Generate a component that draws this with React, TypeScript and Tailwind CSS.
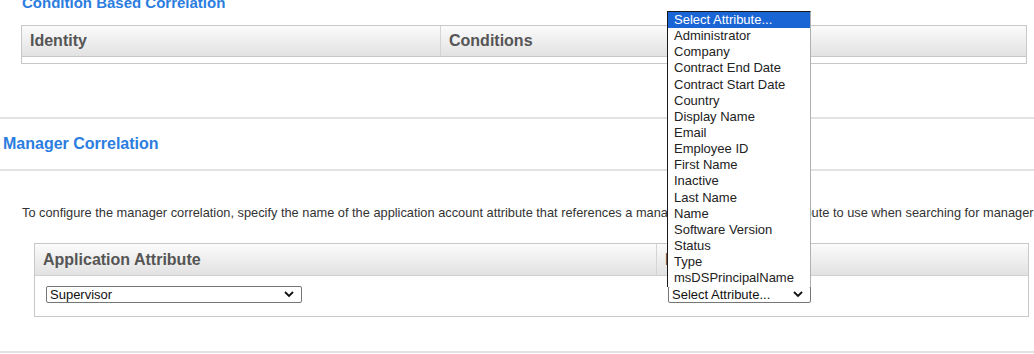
import React from "react";

const items = [
  "Select Attribute...",
  "Administrator",
  "Company",
  "Contract End Date",
  "Contract Start Date",
  "Country",
  "Display Name",
  "Email",
  "Employee ID",
  "First Name",
  "Inactive",
  "Last Name",
  "Name",
  "Software Version",
  "Status",
  "Type",
  "msDSPrincipalName",
];

function Chevron() {
  return (
    <svg width="10" height="7" viewBox="0 0 10 7" className="shrink-0">
      <polyline points="1,1 5,5 9,1" fill="none" stroke="#111" strokeWidth="1.8" />
    </svg>
  );
}

function Select({ label, w }: { label: string; w: string }) {
  return (
    <div
      className={`${w} h-[17px] border border-[#767676] rounded-[2px] bg-white flex items-center justify-between pl-[3px] pr-[7px] text-[13px] leading-none text-[#111]`}
    >
      <span>{label}</span>
      <Chevron />
    </div>
  );
}

const headerBg = "bg-gradient-to-b from-[#fbfbfb] to-[#e2e2e2]";

export default function App() {
  return (
    <div
      className="relative w-[1034px] h-[354px] overflow-hidden bg-white"
      style={{ fontFamily: '"Liberation Sans", Arial, sans-serif' }}
    >
      <div className="flex flex-col">
        {/* Condition Based Correlation */}
        <div className="pl-[22px] mt-[-6px] h-[17px] text-[15px] leading-[17px] font-bold text-[#2b7de0]">
          Condition Based Correlation
        </div>
        <div className="ml-[21px] mt-[14px] w-[1006px] border border-[#c8c8c8]">
          <div className={`flex h-[31px] ${headerBg} border-b border-[#c8c8c8]`}>
            <div className="w-[419px] border-r border-[#d4d4d4] pl-[8px] flex items-center text-[16px] font-bold text-[#555]">
              Identity
            </div>
            <div className="flex-1 pl-[8px] flex items-center text-[16px] font-bold text-[#555]">
              Conditions
            </div>
          </div>
          <div className="h-[6px]" />
        </div>

        <div className="mt-[53px] h-[2px] bg-[#e2e2e2]" />

        {/* Manager Correlation */}
        <div className="h-[50px] pl-[3px] flex items-center text-[16px] font-bold text-[#2b7de0]">
          Manager Correlation
        </div>
        <div className="h-[2px] bg-[#e2e2e2]" />

        <div className="pl-[22px] mt-[34px] text-[12.8px] leading-[15px] text-[#333] whitespace-nowrap">
          To configure the manager correlation, specify the name of the application account attribute that references a manager, and the identity attribute to use when searching for managers.
        </div>

        <div className="ml-[34px] mt-[23px] w-[995px] border border-[#c8c8c8]">
          <div className={`flex h-[32px] ${headerBg} border-b border-[#d0d0d0]`}>
            <div className="w-[622px] border-r border-[#d4d4d4] pl-[8px] flex items-center text-[16px] font-bold text-[#555]">
              Application Attribute
            </div>
            <div className="flex-1 pl-[8px] flex items-center text-[16px] font-bold text-[#555]">
              Identity Attribute
            </div>
          </div>
          <div className="flex h-[40px] items-start pt-[10px]">
            <div className="w-[623px] pl-[11px]">
              <Select label="Supervisor" w="w-[256px]" />
            </div>
            <div className="flex-1 pl-[10px]">
              <Select label="Select Attribute..." w="w-[143px]" />
            </div>
          </div>
        </div>

        <div className="mt-[34px] h-[2px] bg-[#e2e2e2]" />
      </div>

      {/* open dropdown list */}
      <div className="absolute left-[667px] top-[11px] w-[144px] h-[276px] bg-white border-l border-t border-[#1a1a1a] border-r border-r-[#b0b0b0]">
        {items.map((it, i) => (
          <div
            key={it}
            className={`h-[16.15px] leading-[16px] pl-[6px] text-[13px] whitespace-nowrap ${
              i === 0 ? "bg-[#1a65d6] text-white" : "text-[#222]"
            }`}
          >
            {it}
          </div>
        ))}
      </div>
    </div>
  );
}
